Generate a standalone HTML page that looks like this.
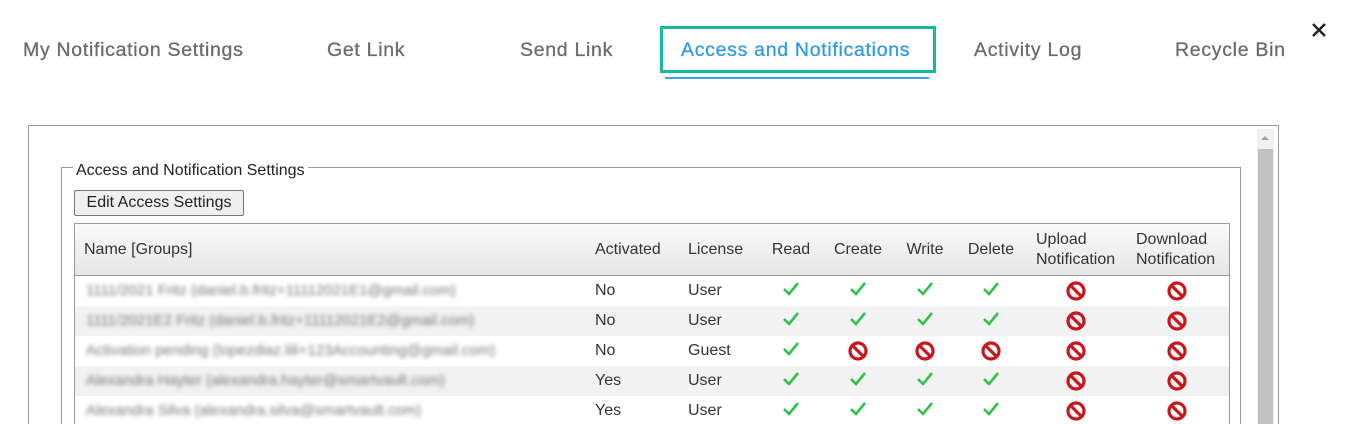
<!DOCTYPE html>
<html><head><style>
html,body{margin:0;width:1352px;height:424px;overflow:hidden}
body{background:#fff;font-family:"Liberation Sans",Arial,sans-serif;position:relative}
.tab{position:absolute;top:39px;font-size:19.5px;color:#6b6b6b;letter-spacing:0.7px;-webkit-text-stroke:0.3px #6b6b6b}
.a{position:absolute}
table{border-collapse:collapse;font-size:16px;color:#333;table-layout:fixed}
td,th{padding:0;height:30px;font-weight:normal;text-align:left}
th{height:51px;line-height:20px}
.c{text-align:center}
.blur{color:#777;filter:blur(2.2px);font-size:15px}
tr.g td{background:#f2f2f2}
</style></head><body>
<div class="tab" style="left:23px">My Notification Settings</div>
<div class="tab" style="left:327px">Get Link</div>
<div class="tab" style="left:520px">Send Link</div>
<div class="tab" style="left:681px;color:#2d9ae8;-webkit-text-stroke:0.3px #2d9ae8">Access and Notifications</div>
<div class="tab" style="left:974px">Activity Log</div>
<div class="tab" style="left:1175px">Recycle Bin</div>
<div class="a" style="left:660px;top:26px;width:270px;height:41px;border:3px solid #14bc96"></div>
<div class="a" style="left:665px;top:77px;width:264px;height:2px;background:#3aa0ee"></div>
<svg class="a" style="left:1311px;top:22px" width="16" height="16"><path d="M2 2L14 14M14 2L2 14" stroke="#222" stroke-width="2.4"/></svg>
<div class="a" style="left:28px;top:125px;width:1249px;height:299px;border:1px solid #999;border-bottom:none"></div>
<div class="a" style="left:1257px;top:129px;width:17px;height:295px;background:#f1f1f1"></div>
<div class="a" style="left:1258px;top:149px;width:15px;height:275px;background:#c1c1c1"></div>
<svg class="a" style="left:1260px;top:135px" width="10" height="6"><path d="M1 5L5 1L9 5Z" fill="#a3a3a3"/></svg>
<div class="a" style="left:61px;top:167px;width:1178px;height:257px;border:1px solid #999;border-bottom:none"></div>
<div class="a" style="left:73px;top:162px;background:#fff;padding:0 3px;font-size:16px;color:#222">Access and Notification Settings</div>
<div class="a" style="left:74px;top:190px;width:168px;height:24px;border:1px solid #777;border-radius:2px;background:#efefef;font-size:16px;color:#222;line-height:24px;text-align:center">Edit Access Settings</div>
<div class="a" style="left:74px;top:223px;width:1154px;height:201px;overflow:hidden;border:1px solid #999;border-bottom:none">
<table style="width:1154px">
<colgroup><col style="width:520px"><col style="width:93px"><col style="width:70px"><col style="width:66px"><col style="width:68px"><col style="width:66px"><col style="width:66px"><col style="width:100px"><col style="width:105px"></colgroup>
<tr style="background:linear-gradient(#fafafa,#e6e6e6);border-bottom:1px solid #999">
<th style="padding-left:9px">Name [Groups]</th><th>Activated</th><th>License</th><th class="c">Read</th><th class="c">Create</th><th class="c">Write</th><th class="c">Delete</th><th style="padding-left:12px">Upload<br>Notification</th><th style="padding-left:12px">Download<br>Notification</th></tr>
<tbody id="b"></tbody>
</table></div>
<script>
var ok='<svg width="18" height="16" viewBox="0 0 18 16"><path d="M2 8L7 13L16 2" fill="none" stroke="#2ec24a" stroke-width="2.6"/></svg>';
var no='<svg width="22" height="22" viewBox="0 0 22 22" style="vertical-align:middle"><circle cx="11" cy="11" r="8" fill="none" stroke="#c8161d" stroke-width="3.2"/><path d="M5.5 5.5L16.5 16.5" stroke="#c8161d" stroke-width="3.2"/></svg>';
var rows=[["1111/2021 Fritz (daniel.b.fritz+11112021E1@gmail.com)","No","User",1],["1111/2021E2 Fritz (daniel.b.fritz+11112021E2@gmail.com)","No","User",1],["Activation pending (lopezdiaz.lili+123Accounting@gmail.com)","No","Guest",0],["Alexandra Hayter (alexandra.hayter@smartvault.com)","Yes","User",1],["Alexandra Silva (alexandra.silva@smartvault.com)","Yes","User",1]];
var h='';rows.forEach(function(r,i){var p=r[3]?ok:no;h+='<tr class="'+(i%2?'g':'')+'"><td style="padding-left:11px"><span class="blur">'+r[0]+'</span></td><td>'+r[1]+'</td><td>'+r[2]+'</td><td class="c">'+ok+'</td><td class="c">'+p+'</td><td class="c">'+p+'</td><td class="c">'+p+'</td><td class="c" style="padding-left:4px">'+no+'</td><td class="c">'+no+'</td></tr>'});
document.getElementById('b').innerHTML=h;
</script>
</body></html>
